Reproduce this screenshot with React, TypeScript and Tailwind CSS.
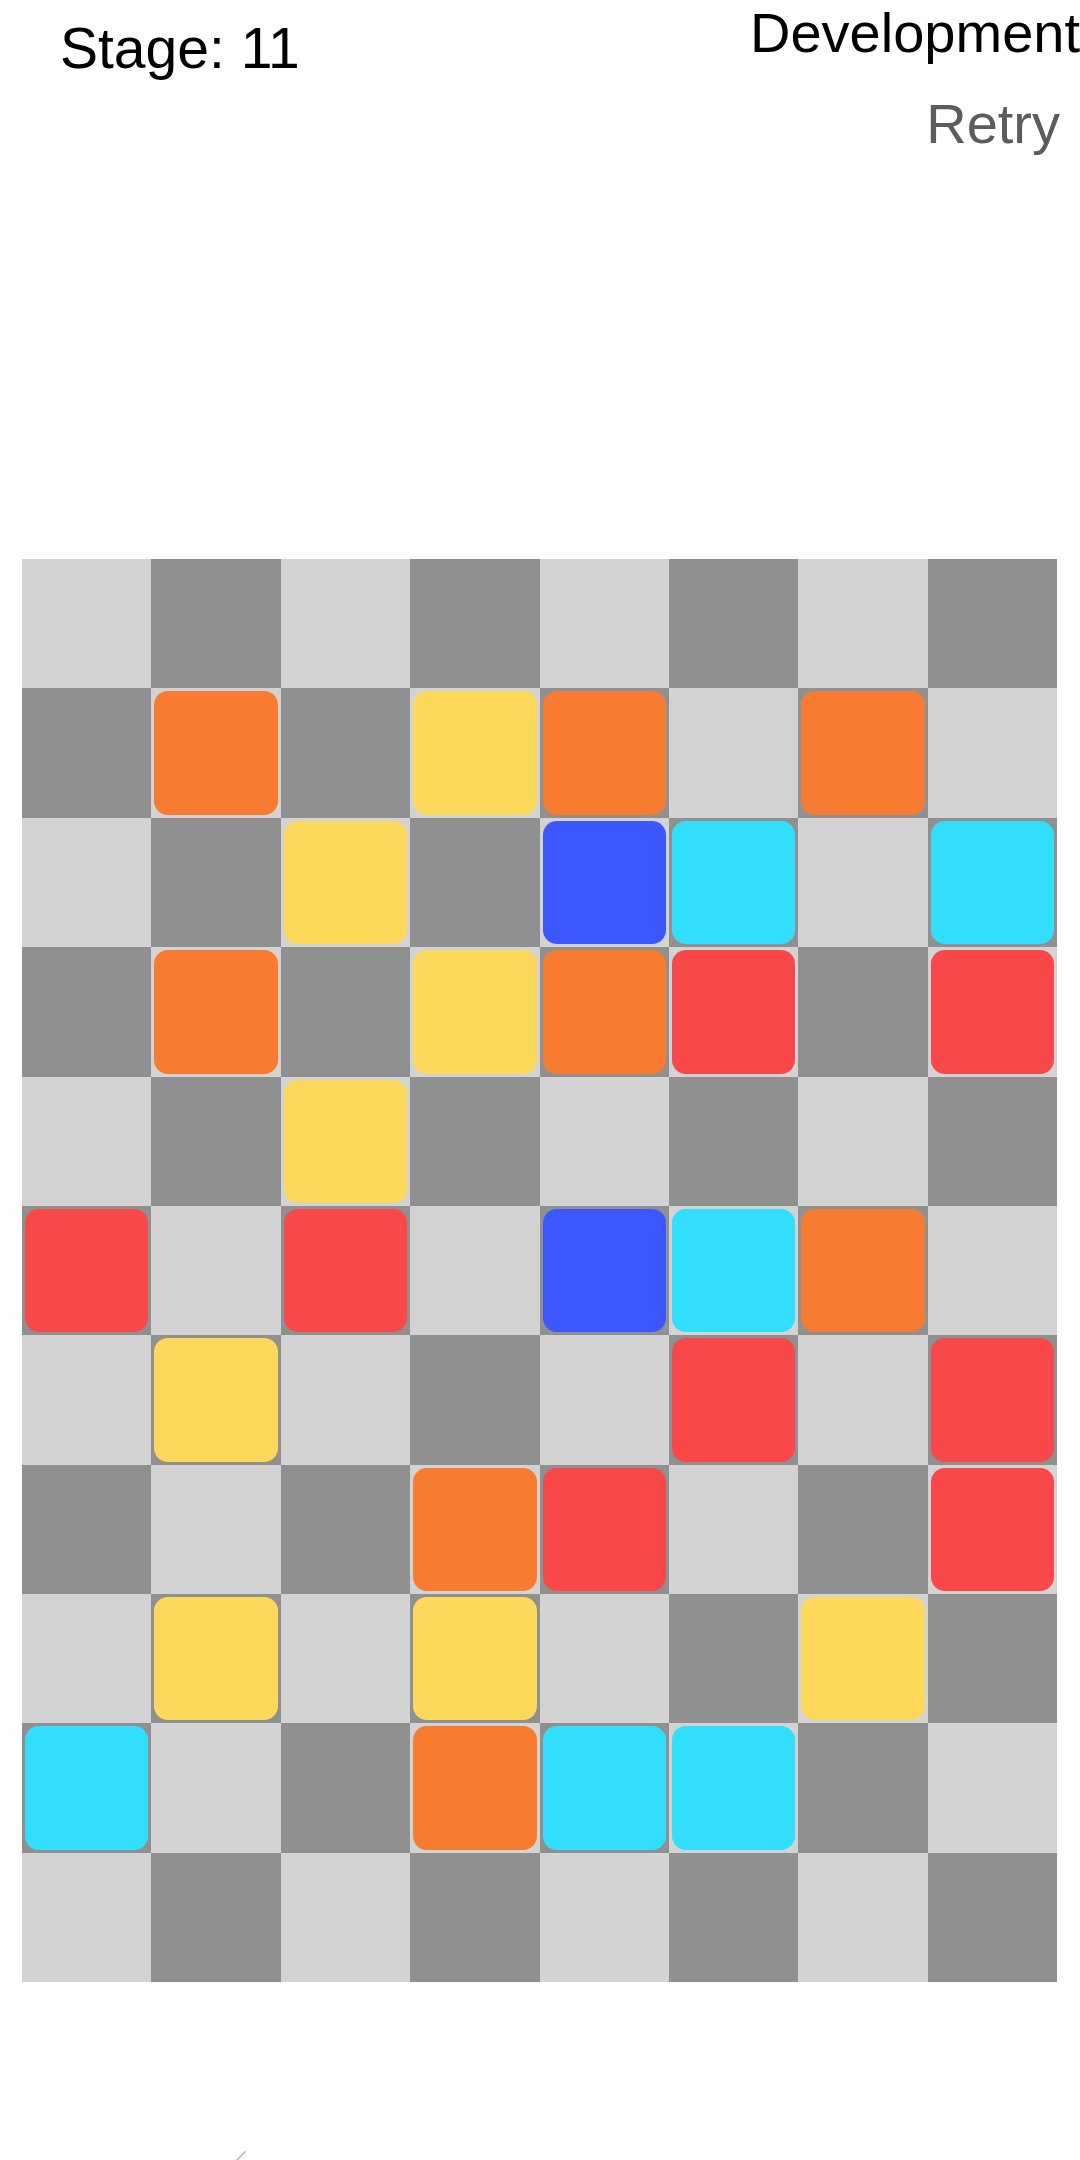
import React from "react";

type Tile = "o" | "y" | "b" | "c" | "r" | ".";

const BOARD: string[] = [
  "........",
  ".o.yo.o.",
  "..y.bc.c",
  ".o.yor.r",
  "..y.....",
  "r.r.bco.",
  ".y...r.r",
  "...or..r",
  ".y.y..y.",
  "c..occ..",
  "........",
];

const TILE_CLASS: Record<Exclude<Tile, ".">, string> = {
  o: "bg-[#f77c32]",
  y: "bg-[#fcd95b]",
  b: "bg-[#3d57fe]",
  c: "bg-[#33defc]",
  r: "bg-[#f94849]",
};

function Cell({ row, col, tile }: { row: number; col: number; tile: Tile }) {
  const light = (row + col) % 2 === 0;
  return (
    <div
      className={`aspect-square p-[3px] ${light ? "bg-[#d3d3d3]" : "bg-[#909090]"}`}
    >
      {tile !== "." && (
        <div className={`w-full h-full rounded-[14px] ${TILE_CLASS[tile]}`} />
      )}
    </div>
  );
}

export default function App() {
  return (
    <div
      className="relative min-h-[2160px] w-[1080px] bg-[#fefefe] overflow-hidden"
      style={{ fontFamily: '"Liberation Sans", Arial, sans-serif' }}
    >
      <header className="flex items-start justify-between">
        <div className="pl-[60px] pt-[20px] text-[57px] leading-none text-black">
          Stage: 11
        </div>
        <div className="flex flex-col items-end pt-[5px]">
          <div className="text-[56px] leading-none text-black whitespace-nowrap">
            Development
          </div>
          <button className="mt-[35px] pr-[20px] text-[56px] leading-none text-[#5c5c5c]">
            Retry
          </button>
        </div>
      </header>

      <main className="ml-[22px] mt-[407px] grid w-[1035px] grid-cols-8">
        {BOARD.map((line, r) =>
          line.split("").map((t, c) => (
            <Cell key={`${r}-${c}`} row={r} col={c} tile={t as Tile} />
          ))
        )}
      </main>

      <svg
        className="absolute bottom-0 left-[234px]"
        width="14"
        height="10"
        viewBox="0 0 14 10"
      >
        <line x1="3" y1="10" x2="11" y2="2" stroke="#c4c4c4" strokeWidth="2" strokeLinecap="round" />
      </svg>
    </div>
  );
}
